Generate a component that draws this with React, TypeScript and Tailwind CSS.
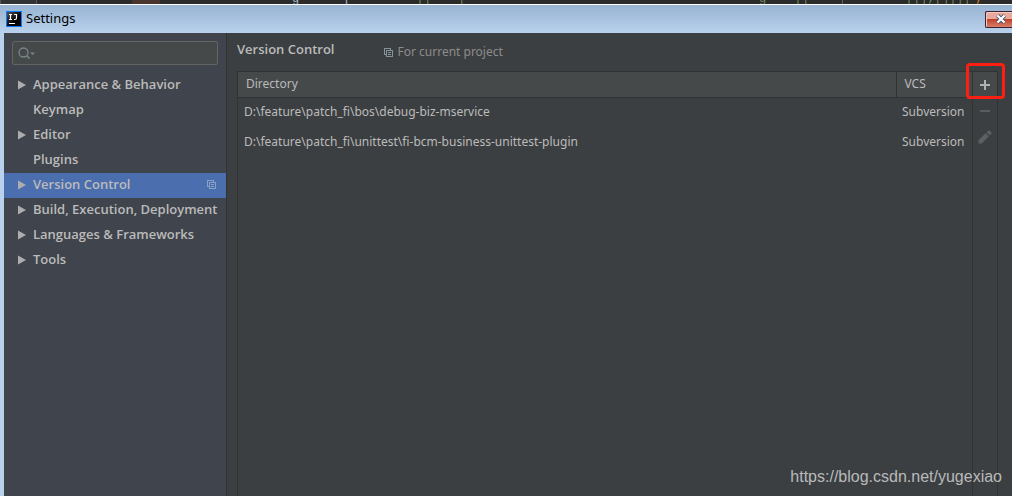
import React from "react";

type Item = { label: string; expandable: boolean; selected?: boolean };

const items: Item[] = [
  { label: "Appearance & Behavior", expandable: true },
  { label: "Keymap", expandable: false },
  { label: "Editor", expandable: true },
  { label: "Plugins", expandable: false },
  { label: "Version Control", expandable: true, selected: true },
  { label: "Build, Execution, Deployment", expandable: true },
  { label: "Languages & Frameworks", expandable: true },
  { label: "Tools", expandable: true },
];

const mappings = [
  { directory: "D:\\feature\\patch_fi\\bos\\debug-biz-mservice", vcs: "Subversion" },
  { directory: "D:\\feature\\patch_fi\\unittest\\fi-bcm-business-unittest-plugin", vcs: "Subversion" },
];

function ProjectIcon({ className }: { className: string }) {
  return (
    <svg viewBox="0 0 9 9" className={"h-[9px] w-[9px] shrink-0 " + className} fill="none" stroke="currentColor" aria-hidden="true" shapeRendering="crispEdges">
      <path d="M2 6.5H.5V.5h6V2M2.500 2.500h6v6h-6zM4 4.500h3M4 6.500h3" />
    </svg>
  );
}

function EditorStrip() {
  return (
    <div className="flex h-[5px] items-end overflow-hidden border-b border-white bg-[#2b2b2b] font-['Liberation_Mono',monospace] text-[12px] leading-[10px] whitespace-pre text-[#6a8759]" aria-hidden="true">
      <div className="flex h-full w-[37px] shrink-0 border-x border-[#555] bg-[#313335]" />
      <div className="ml-[95px] h-full w-7 shrink-0 bg-[#4a352e]" />
      <span className="ml-[132px] w-[51px] shrink-0 text-[#a9b7c6]">g</span>
      <span className="w-[74px] shrink-0 text-[#a9b7c6]">{"{"}</span>
      <span className="w-[41px] shrink-0">{"[{"}</span>
      <span className="w-[301px] shrink-0">{"}"}</span>
      <span className="w-[36px] shrink-0">g</span>
      <span className="w-[47px] shrink-0">{"[{"}</span>
      <span className="h-full w-[64px] shrink-0 border-l border-[#606366]" />
      <span className="shrink-0">{"[{},[]}}}"}</span>
      <span className="ml-1 shrink-0 text-[#cc7832]">;</span>
    </div>
  );
}

function TitleBar() {
  return (
    <header className="flex h-7 items-center bg-linear-to-b from-[#98b4d2] to-[#b9d1ec] pl-[6px]">
      <svg viewBox="0 0 16 16" className="h-4 w-4 shrink-0" aria-hidden="true">
        <defs>
          <linearGradient id="logo" x1="0" y1="0" x2="1" y2="1">
            <stop offset="0" stopColor="#555" />
            <stop offset=".6" stopColor="#000" />
          </linearGradient>
        </defs>
        <rect width="16" height="16" fill="#087cfa" />
        <rect x="1" y="1" width="14" height="14" fill="url(#logo)" />
        <path d="M3 3.500h3M4.500 3.500v5M3 8.500h3M8 3.500h3M10.500 3v4q0 1.500-1.500 1.500H8M3 12.500h6" stroke="#fff" fill="none" strokeWidth="1.2" />
      </svg>
      <h1 className="ml-1 text-[13px] text-black">Settings</h1>
      <button aria-label="Close" className="ml-auto flex h-[17px] w-[27px] items-center justify-center rounded-l-[2px] border border-r-0 border-[#3a2230] bg-linear-to-b from-[#e9a99b] from-45% via-[#c0402a] via-50% to-[#d8806a] pl-1 shadow-[inset_1px_1px_0_#f3c9c0]">
        <svg viewBox="0 0 12 10" className="h-[10px] w-3" aria-hidden="true">
          <path d="M2.500 1.500l7 7M9.500 1.500l-7 7" stroke="#4a4f68" strokeWidth="4" />
          <path d="M2.500 1.500l7 7M9.500 1.500l-7 7" stroke="#fff" strokeWidth="2.400" />
        </svg>
      </button>
    </header>
  );
}

function Sidebar() {
  return (
    <aside className="w-[223px] shrink-0 border-r border-[#323232] bg-[#40444c]">
      <label className="mx-2 mt-2 flex h-6 items-center rounded-[2px] border border-[#646464] bg-[#45494a] pl-[5px]">
        <svg viewBox="0 0 17 13" className="h-[13px] w-[17px] shrink-0" fill="none" aria-hidden="true">
          <circle cx="5.500" cy="5.500" r="4.500" stroke="#798589" strokeWidth="1.300" />
          <path d="M8.500 8.500l3 3" stroke="#798589" strokeWidth="1.600" />
          <path d="M12 5.500h5L14.500 8z" fill="#798589" />
        </svg>
        <input aria-label="Search settings" className="h-full min-w-0 flex-1 bg-transparent px-1 text-[13px] text-[#bbb] outline-none" />
      </label>
      <nav className="mt-2 font-['Open_Sans','Noto_Sans',sans-serif]">
        {items.map((item) => (
          <button key={item.label} className={"flex h-[25px] w-full items-center pr-[10px] pb-[2px] pl-[14px] text-left text-[13px] font-semibold whitespace-nowrap text-[#bbb] " + (item.selected ? "bg-[#4b6eaf]" : "")}>
            <svg viewBox="0 0 8 10" className="mr-[7px] h-[10px] w-2 shrink-0" aria-hidden="true">
              {item.expandable && <path d="M0 0.500v9l8-4.500z" fill="#adadad" />}
            </svg>
            <span>{item.label}</span>
            {item.selected && <ProjectIcon className="ml-auto text-[#87a0c4]" />}
          </button>
        ))}
      </nav>
    </aside>
  );
}

function Toolbar() {
  return (
    <div className="flex w-[26px] shrink-0 flex-col items-center border-x border-t border-[#323232]">
      <button aria-label="Add" className="relative flex h-[25px] w-full items-center justify-center bg-[#45494a]">
        <svg viewBox="0 0 10 10" className="h-[10px] w-[10px]" shapeRendering="crispEdges" aria-hidden="true">
          <path d="M0 5h10M5 0v10" stroke="#afb1b3" strokeWidth="2" />
        </svg>
        <span className="absolute -top-[9px] -right-2 -bottom-[2px] -left-[7px] rounded-[4px] border-3 border-[#fc1f12]" />
      </button>
      <button aria-label="Remove" className="flex h-[27px] w-full items-center justify-center">
        <svg viewBox="0 0 10 2" className="h-[2px] w-[10px]" aria-hidden="true">
          <path d="M0 1h10" stroke="#5a5d5f" strokeWidth="2" />
        </svg>
      </button>
      <button aria-label="Edit" className="flex h-[25px] w-full items-center justify-center">
        <svg viewBox="0 0 14 14" className="h-[14px] w-[14px]" fill="#5d6062" aria-hidden="true">
          <path d="M.5 10.300l7.300-7.200 3.100 3.100-7.200 7.200H.5zM8.700 2.300l1.500-1.500q.8-.7 1.600 0l1.500 1.500q.7.800 0 1.600l-1.500 1.500z" />
        </svg>
      </button>
    </div>
  );
}

export default function App() {
  return (
    <div className="relative flex min-h-screen flex-col bg-[#b9d1ec] font-['Noto_Sans','Open_Sans',sans-serif]">
      <EditorStrip />
      <TitleBar />
      <div className="ml-1 flex flex-1 bg-[#3c3f41]">
        <Sidebar />
        <main className="flex min-w-0 flex-1 flex-col pl-[10px] text-[12px] text-[#bbb]">
          <div className="flex h-[38px] items-start pt-[7px]">
            <h2 className="font-['Open_Sans','Noto_Sans',sans-serif] text-[13px] leading-[18px] font-semibold">Version Control</h2>
            <p className="mt-[3px] ml-[50px] flex items-center gap-1 leading-[18px] text-[#8c8c8c]">
              <ProjectIcon className="text-[#87939a]" />
              For current project
            </p>
          </div>
          <div className="flex flex-1 pr-[14px]">
            <div className="min-w-0 flex-1 border-t border-l border-[#323232]">
              <table className="w-full table-fixed border-collapse text-left">
                <thead>
                  <tr className="h-[25px] border-b border-[#323232] bg-[#45494a]">
                    <th className="border-r border-[#323232] py-0 pl-2 font-normal">Directory</th>
                    <th className="w-[76px] py-0 pl-2 font-normal">VCS</th>
                  </tr>
                </thead>
                <tbody>
                  {mappings.map((row) => (
                    <tr key={row.directory} className="h-[30px]">
                      <td className="py-0 pl-[6px]">{row.directory}</td>
                      <td className="py-0 pl-[6px]">{row.vcs}</td>
                    </tr>
                  ))}
                </tbody>
              </table>
            </div>
            <Toolbar />
          </div>
        </main>
      </div>
      <p className="absolute right-[10px] bottom-[7px] font-['Liberation_Sans',Arial,sans-serif] text-base text-[#b9babb]">https://blog.csdn.net/yugexiao</p>
    </div>
  );
}
